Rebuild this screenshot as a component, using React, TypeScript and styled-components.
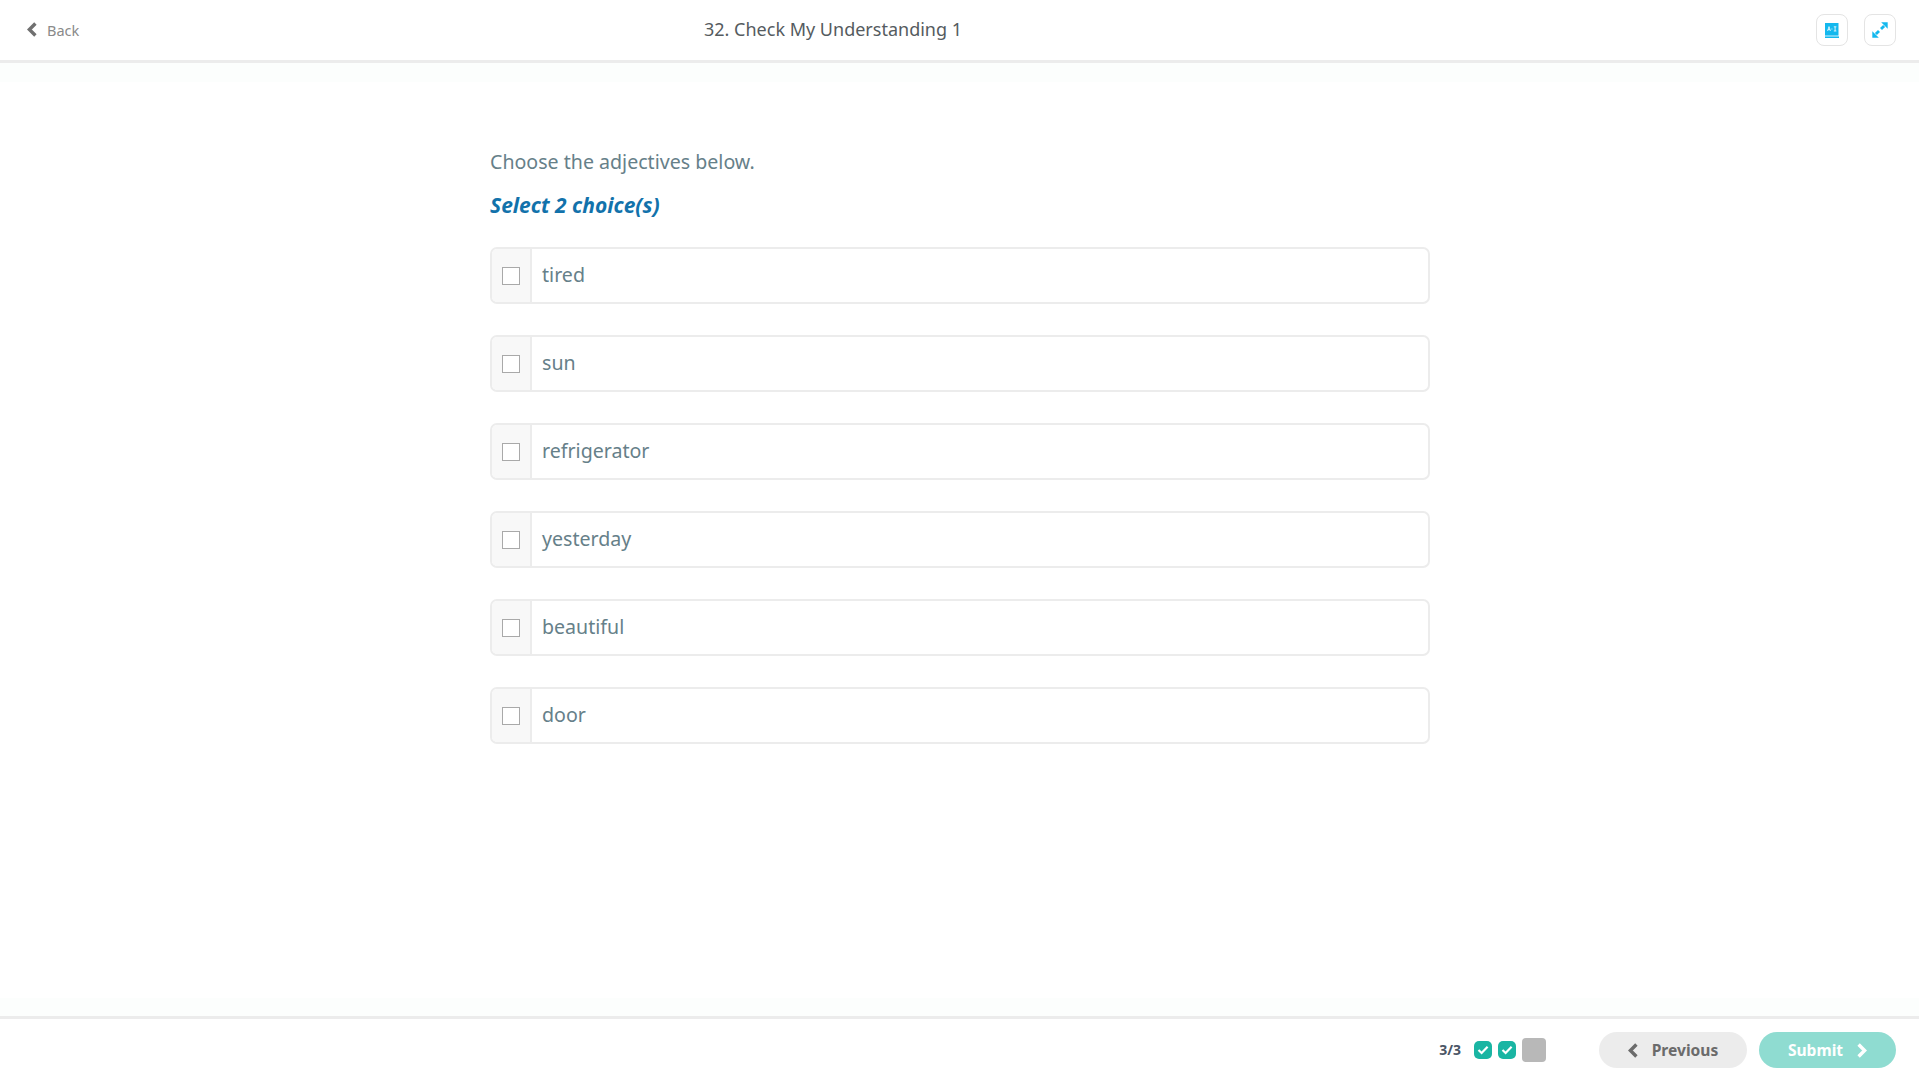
import React from 'react'
import styled, { createGlobalStyle } from 'styled-components'

const GlobalStyle = createGlobalStyle`
  html, body, #root { margin: 0; padding: 0; height: 100%; }
  body { font-family: "Noto Sans", "Open Sans", sans-serif; background: #fff; overflow: hidden; }
  * { box-sizing: border-box; }
`

const Page = styled.div`
  height: 1073px;
  display: flex;
  flex-direction: column;
`

const Header = styled.header`
  height: 63px;
  flex: none;
  display: flex;
  align-items: center;
  padding: 0 23px 0 27px;
  background: #fff;
  border-bottom: 3px solid #ececec;
`

const BackLink = styled.a`
  width: 676px;
  margin-top: -1px;
  display: flex;
  align-items: center;
  gap: 10px;
  font-size: 14.5px;
  color: #8a8a8a;
`

const HeaderTitle = styled.h1`
  flex: 1;
  margin: -2px 0 0 1px;
  font-size: 18px;
  font-weight: 400;
  color: #555b60;
`

const HeaderTools = styled.div`
  display: flex;
  gap: 16px;
`

const ToolButton = styled.button`
  width: 32px;
  height: 32px;
  padding: 0;
  display: flex;
  align-items: center;
  justify-content: center;
  background: #fff;
  border: 1px solid #e4e4e4;
  border-radius: 8px;
`

const Main = styled.main`
  flex: 1;
  padding: 84px 0 0 490px;
  background:
    linear-gradient(#fcfefd, #fcfefd) top / 100% 19px no-repeat,
    linear-gradient(#fcfefd, #fcfefd) bottom / 100% 18px no-repeat,
    #fff;
`

const Question = styled.div`
  width: 940px;
`

const Prompt = styled.p`
  margin: 0;
  height: 30px;
  line-height: 30px;
  font-size: 19.6px;
  color: #668089;
`

const Hint = styled.p`
  margin: 13px 0 0;
  height: 30px;
  line-height: 30px;
  font-size: 21px;
  font-weight: 700;
  font-style: italic;
  color: #1272ab;
`

const Choices = styled.ul`
  list-style: none;
  margin: 27px 0 0;
  padding: 0;
  display: flex;
  flex-direction: column;
  gap: 31px;
`

const Choice = styled.li`
  height: 57px;
  display: flex;
  background: #fff;
  border: 2px solid #ececec;
  border-radius: 7px;
  overflow: hidden;
`

const BoxCell = styled.div`
  width: 40px;
  flex: none;
  display: flex;
  align-items: center;
  justify-content: center;
  background: #f8f8f8;
  border-right: 2px solid #ececec;
`

const Box = styled.span`
  width: 18px;
  height: 18px;
  background: #fff;
  border: 1px solid #a9a9a9;
`

const ChoiceLabel = styled.span`
  padding-left: 10px;
  line-height: 51px;
  font-size: 19.6px;
  color: #668089;
`

const Footer = styled.footer`
  height: 57px;
  flex: none;
  display: flex;
  align-items: center;
  justify-content: flex-end;
  padding: 8px 23px 0 0;
  background: #fff;
  border-top: 3px solid #ececec;
`

const Progress = styled.span`
  margin: -1px 13px 0 0;
  font-size: 14px;
  font-weight: 700;
  color: #4a5565;
`

const Steps = styled.div`
  display: flex;
  align-items: center;
  gap: 6px;
  margin-right: 53px;
`

const DoneStep = styled.span`
  width: 18px;
  height: 18px;
  display: flex;
  align-items: center;
  justify-content: center;
  background: #1ab5a3;
  border-radius: 5px;
`

const OpenStep = styled.span`
  width: 24px;
  height: 24px;
  background: #b8b8b8;
  border-radius: 4px;
`

const NavButton = styled.button<{ $primary?: boolean }>`
  height: 36px;
  padding: 0;
  border: 0;
  border-radius: 18px;
  display: flex;
  align-items: center;
  justify-content: center;
  gap: 14px;
  font-family: inherit;
  font-size: 15.6px;
  font-weight: 700;
  background: ${p => (p.$primary ? '#8fdcd1' : '#ececec')};
  color: ${p => (p.$primary ? '#fff' : '#6b6b6b')};
  width: ${p => (p.$primary ? '137px' : '148px')};
  margin-left: ${p => (p.$primary ? '12px' : '0')};
`

const Chevron = ({ dir, color }: { dir: 'left' | 'right'; color: string }) => (
  <svg width="10" height="15" viewBox="0 0 10 15" fill="none">
    <path
      d={dir === 'left' ? 'M8.4 1.5 2.4 7.5l6 6' : 'M1.6 1.5l6 6-6 6'}
      stroke={color}
      strokeWidth="3.4"
    />
  </svg>
)

const Tick = () => (
  <svg width="12" height="10" viewBox="0 0 12 10" fill="none">
    <path d="M1.5 5 4.6 8l6-6.2" stroke="#fff" strokeWidth="2.2" />
  </svg>
)

const GlossaryIcon = () => (
  <svg width="14" height="15" viewBox="0 0 14 15">
    <path d="M0 0h13.5v12.6H0z" fill="#14b8ee" />
    <path d="M0 13.4h14V15H0z" fill="#14b8ee" />
    <path
      d="M2.6 8 4 3.6 5.4 8M3.1 6.6h1.8M6.4 6h1M8.8 3.8h2.6M10.1 3.8V8M8.8 8h2.6"
      stroke="#fff"
      strokeWidth=".8"
      fill="none"
    />
  </svg>
)

const ExpandIcon = () => (
  <svg width="16" height="16" viewBox="0 0 16 16" fill="#14b8ee">
    <path d="M9.2.3h6.5v6.5z" />
    <path d="M.3 15.7V9.2l6.5 6.5z" />
    <path d="M12.1 4 9 7.1" stroke="#14b8ee" strokeWidth="2.8" />
    <path d="M3.9 12 7 8.9" stroke="#14b8ee" strokeWidth="2.8" />
  </svg>
)

const choices = ['tired', 'sun', 'refrigerator', 'yesterday', 'beautiful', 'door']

export default function App() {
  return (
    <Page>
      <GlobalStyle />
      <Header>
        <BackLink>
          <Chevron dir="left" color="#707070" />
          Back
        </BackLink>
        <HeaderTitle>32. Check My Understanding 1</HeaderTitle>
        <HeaderTools>
          <ToolButton aria-label="Glossary"><GlossaryIcon /></ToolButton>
          <ToolButton aria-label="Expand"><ExpandIcon /></ToolButton>
        </HeaderTools>
      </Header>
      <Main>
        <Question>
          <Prompt>Choose the adjectives below.</Prompt>
          <Hint>Select 2 choice(s)</Hint>
          <Choices>
            {choices.map(c => (
              <Choice key={c}>
                <BoxCell><Box /></BoxCell>
                <ChoiceLabel>{c}</ChoiceLabel>
              </Choice>
            ))}
          </Choices>
        </Question>
      </Main>
      <Footer>
        <Progress>3/3</Progress>
        <Steps>
          <DoneStep><Tick /></DoneStep>
          <DoneStep><Tick /></DoneStep>
          <OpenStep />
        </Steps>
        <NavButton>
          <Chevron dir="left" color="#6b6b6b" />
          Previous
        </NavButton>
        <NavButton $primary>
          Submit
          <Chevron dir="right" color="#fff" />
        </NavButton>
      </Footer>
    </Page>
  )
}
